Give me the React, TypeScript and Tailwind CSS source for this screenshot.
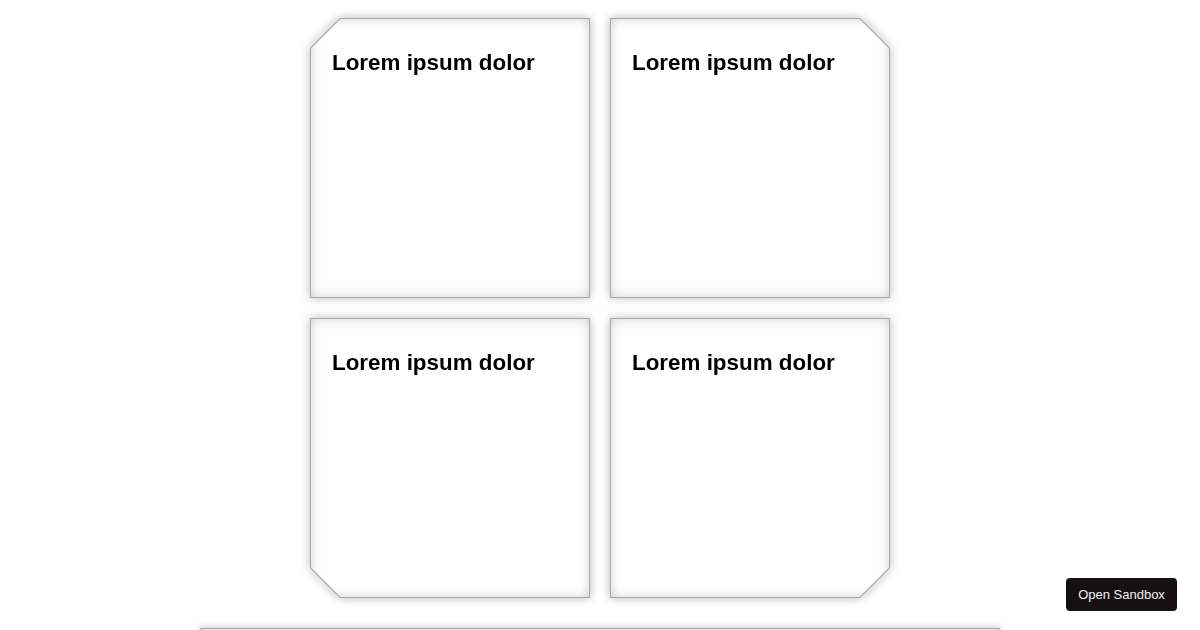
import React from "react";

const clips = [
  "polygon(30px 0, 100% 0, 100% 100%, 0 100%, 0 30px)",
  "polygon(0 0, calc(100% - 30px) 0, 100% 30px, 100% 100%, 0 100%)",
  "polygon(0 0, 100% 0, 100% 100%, 30px 100%, 0 calc(100% - 30px))",
  "polygon(0 0, 100% 0, 100% calc(100% - 30px), calc(100% - 30px) 100%, 0 100%)",
];
const innerClips = [
  "polygon(29.6px 0, 100% 0, 100% 100%, 0 100%, 0 29.6px)",
  "polygon(0 0, calc(100% - 29.6px) 0, 100% 29.6px, 100% 100%, 0 100%)",
  "polygon(0 0, 100% 0, 100% 100%, 29.6px 100%, 0 calc(100% - 29.6px))",
  "polygon(0 0, 100% 0, 100% calc(100% - 29.6px), calc(100% - 29.6px) 100%, 0 100%)",
];

function Card({ i }: { i: number }) {
  return (
    <div className="w-[280px] h-[280px] [filter:drop-shadow(0_0_5px_rgba(0,0,0,0.28))]">
      <div className="w-full h-full bg-[#a9a9a9] p-px" style={{ clipPath: clips[i] }}>
        <div
          className="w-full h-full bg-white shadow-[inset_0_0_12px_rgba(0,0,0,0.18)] pt-[31px] pl-[21px]"
          style={{ clipPath: innerClips[i] }}
        >
          <h2 className="text-[22.4px] leading-[1.15] font-bold text-black font-['Liberation_Sans',Arial,sans-serif]">
            Lorem ipsum dolor
          </h2>
        </div>
      </div>
    </div>
  );
}

export default function App() {
  return (
    <div className="relative w-[1200px] h-[630px] overflow-hidden bg-white font-['Liberation_Sans',Arial,sans-serif]">
      <div className="flex flex-col items-center pt-[18px]">
        <div className="grid grid-cols-[280px_280px] gap-[20px]">
          <Card i={0} />
          <Card i={1} />
          <Card i={2} />
          <Card i={3} />
        </div>
        <div className="mt-[30px] w-[800px] h-[200px] border border-[#a9a9a9] bg-white shadow-[0_0_8px_rgba(0,0,0,0.25),inset_0_0_12px_rgba(0,0,0,0.18)]" />
      </div>
      <button className="fixed right-[23px] bottom-[19px] w-[111px] h-[33px] rounded-[4px] bg-[#151113] text-[#f2f2f2] text-[13px] font-['Liberation_Sans',Arial,sans-serif] flex items-center justify-center">
        Open Sandbox
      </button>
    </div>
  );
}
